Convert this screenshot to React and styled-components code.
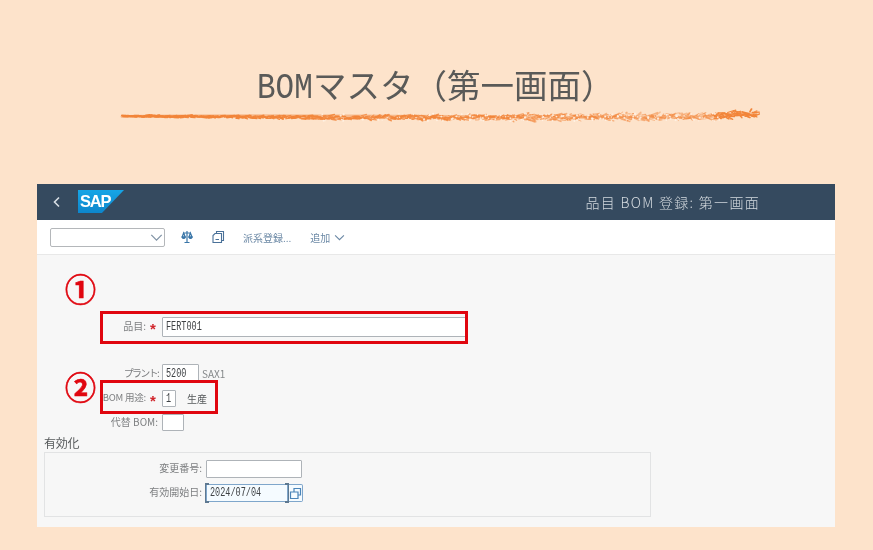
import React from "react";
import styled, { createGlobalStyle } from "styled-components";

const Global = createGlobalStyle`
  html, body { margin: 0; padding: 0; background: #fde3cb; }
  body { width: 873px; height: 550px; overflow: hidden; font-family: "Noto Sans CJK JP", "Liberation Sans", sans-serif; }
`;
const Page = styled.div`
  width: 873px; height: 550px; display: flex; flex-direction: column; background: #fde3cb; overflow: hidden;
`;
const Title = styled.h1`
  margin: 62px 0 0 257px; height: 44px; line-height: 44px; font-size: 33.5px; font-weight: 400; color: #5a5a58;
  font-family: "Noto Sans CJK JP", sans-serif; white-space: nowrap; filter: blur(.35px);
`;
const Latin = styled.span`
  display: inline-block; width: 56px; font-family: "Liberation Mono", monospace; font-size: 36px; transform: scaleX(.86); transform-origin: left center;
`;
const BrushSvg = styled.svg`
  display: block; margin: 2px 0 0 120px; width: 640px; height: 16px; flex: none; filter: blur(.45px);
`;
const Screen = styled.main`
  margin: 60px 0 0 37px; width: 798px; height: 343px; display: flex; flex-direction: column; background: #f7f7f7; position: relative; filter: blur(.3px);
`;
const Shell = styled.header`
  height: 36px; background: #354a5f; display: flex; align-items: center; padding: 0 75px 0 15px; flex: none;
`;
const Back = styled.span`
  display: flex; width: 26px; color: #d8dee4;
`;
const Logo = styled.span`
  width: 46px; height: 23px; margin-bottom: 1px; background: linear-gradient(#16a5e6, #0d86cc);
  clip-path: polygon(0 0, 100% 0, 52% 100%, 0 100%);
  color: #fff; font: 700 16.5px/22px "Liberation Sans", sans-serif; letter-spacing: -1.2px; padding-left: 2px; box-sizing: border-box;
`;
const ShellTitle = styled.span`
  margin-left: auto; color: #d3d9de; font-size: 14px; font-weight: 300; letter-spacing: 1.3px; white-space: nowrap;
`;
const Toolbar = styled.nav`
  height: 35px; background: #fff; border-bottom: 1px solid #e8e8e8; box-sizing: border-box; display: flex; align-items: center; padding: 0 0 0 13px; flex: none;
`;
const Select = styled.div`
  width: 115px; height: 19px; box-sizing: border-box; border: 1px solid #b4b7ba; border-radius: 2px; background: #fff; display: flex; align-items: center; justify-content: flex-end; padding-right: 1px; color: #8294a6;
`;
const ToolIcon = styled.svg`
  flex: none; width: 14px; height: 14px; margin-left: ${p => p.$gap}px;
`;
const ToolText = styled.span`
  color: #6b88a5; font-size: 10px; margin-left: ${p => p.$gap}px; white-space: nowrap; display: inline-flex; align-items: center; gap: 4px;
`;
const Content = styled.section`
  flex: 1; position: relative; display: flex; flex-direction: column;
`;
const Row = styled.div`
  display: flex; align-items: center; height: ${p => p.$h}px; margin-top: ${p => p.$top}px;
`;
const Label = styled.label`
  width: ${p => p.$w || 125}px; flex: none; box-sizing: border-box; padding: 0 4px 2px 0; display: flex; justify-content: flex-end; align-items: center; gap: 2px;
  color: #7d7f81; font-size: ${p => p.$size || 10}px; letter-spacing: ${p => p.$ls || 0}px; white-space: nowrap; line-height: 1;
`;
const Star = styled.span`
  color: #d0242a; font-size: 15px; font-weight: 700; width: 10px; height: 10px; text-align: center; line-height: 15px; font-family: "Liberation Sans", sans-serif; letter-spacing: 0;
`;
const Input = styled.div`
  width: ${p => p.$w}px; height: 100%; box-sizing: border-box; border: 1px solid #aeb3b8; border-radius: 1px; background: #fff; flex: none;
  display: flex; align-items: center; padding-left: 3px; overflow: hidden;
`;
const Value = styled.span`
  display: inline-block; font: 12px/1 "Liberation Mono", monospace; color: #3f4245; transform: scaleX(.71); transform-origin: left center; white-space: nowrap;
`;
const After = styled.span`
  color: ${p => p.$dark ? "#55585a" : "#85888a"}; font-size: 10px; margin-left: ${p => p.$gap}px; white-space: nowrap;
`;
const SectionTitle = styled.h2`
  margin: 5px 0 0 7px; height: 14px; line-height: 14px; font-size: 12px; letter-spacing: -.2px; font-weight: 400; color: #55585a;
`;
const Group = styled.div`
  margin: 2px 0 0 7px; width: 607px; height: 65px; box-sizing: border-box; border: 1px solid #e2e3e4; padding-top: 7px; display: flex; flex-direction: column;
`;
const DateField = styled(Input)`
  border: 1px solid #7fa6cb; border-radius: 0; background: #f5fbff; position: relative; overflow: visible;
  &::before, &::after {
    content: ""; position: absolute; top: -2px; bottom: -2px; width: 3px; border: 1px solid #5e7890; border-width: 2px 0 2px 1px;
  }
  &::before { left: -2px; }
  &::after { right: -2px; transform: scaleX(-1); }
`;
const ValueHelp = styled.span`
  width: 15px; height: 100%; box-sizing: border-box; border: 1px solid #7fa6cb; border-left: 0; border-radius: 0 2px 2px 0; background: #f5fbff; display: flex; align-items: center; justify-content: center; flex: none;
`;
const Mark = styled.div`
  position: absolute; box-sizing: border-box; border: 3px solid #e0060f; left: ${p => p.$x}px; top: ${p => p.$y}px; width: ${p => p.$w}px; height: ${p => p.$h}px; pointer-events: none;
`;
const Num = styled.span`
  position: absolute; left: ${p => p.$x}px; top: ${p => p.$y}px; color: #e0060f; font-size: 31px; font-weight: 700; line-height: 34px; -webkit-text-stroke: .6px #e0060f; font-family: "Noto Sans CJK JP", sans-serif;
`;

function rng(seed) {
  let s = seed;
  return () => { s = (s * 16807) % 2147483647; return s / 2147483647; };
}
const strokes = (() => {
  const r = rng(4711), out = [];
  for (let x = 2; x < 636; x += .8) {
    const t = x / 636;
    const tip = t > .93 ? (t - .93) * 45 : 0;
    const base = 8 + 1.6 * Math.sin(t * 3.14) - tip;
    const spread = 0.5 + 2.5 * Math.min(1, t * 1.6);
    const y = base + (r() - .5) * spread * 2;
    const len = 1.5 + r() * (3 + 3 * t);
    const fade = t > .93 ? .95 : t < .2 ? .95 : Math.max(.3, .9 - (t - .2) * .8);
    out.push({ x, y, len, op: fade + r() * .15, tilt: (r() - .5) * (.8 + 5 * t), w: .8 + r() * (t < .2 ? 1.4 : 1) });
  }
  return out;
})();
const gaps = (() => {
  const r = rng(91), out = [];
  for (let i = 0; i < 210; i++) {
    const x = 200 + Math.pow(r(), .65) * 400;
    out.push({ x, y: 5.5 + r() * 7.5, a: .35 + r() * .8 });
  }
  return out;
})();

function Brush() {
  return (
    <BrushSvg viewBox="0 0 640 16" aria-hidden="true">
      <path d="M2 8.4 C120 6.6 250 8 420 9 S600 9 636 5.5" fill="none" stroke="#f39a5c" strokeOpacity=".55" strokeWidth="3" strokeLinecap="round" />
      {strokes.map((s, i) => (
        <line key={i} x1={s.x} y1={s.y} x2={s.x + s.len} y2={s.y + s.tilt} stroke="#f2853a" strokeOpacity={s.op} strokeWidth={s.w} strokeLinecap="round" />
      ))}
      {gaps.map((g, i) => <circle key={i} cx={g.x} cy={g.y} r={g.a} fill="#fff3e8" fillOpacity=".85" />)}
    </BrushSvg>
  );
}
const Chevron = ({ size = 10, color = "currentColor" }) => (
  <svg width={size} height={size} viewBox="0 0 10 10" fill="none" stroke={color} strokeWidth="1"><path d="M1 3l4 4 4-4" /></svg>
);

export default function App() {
  return (
    <Page>
      <Global />
      <Title><Latin>BOM</Latin>マスタ（第一画面）</Title>
      <Brush />
      <Screen>
        <Shell>
          <Back>
            <svg width="10" height="12" viewBox="0 0 10 12" fill="none" stroke="currentColor" strokeWidth="1.6"><path d="M7 1.5L2.5 6 7 10.5" /></svg>
          </Back>
          <Logo>SAP</Logo>
          <ShellTitle>品目 BOM 登録: 第一画面</ShellTitle>
        </Shell>
        <Toolbar>
          <Select><Chevron size={13} /></Select>
          <ToolIcon $gap={15} viewBox="0 0 14 14" fill="none" stroke="#3a76a8" strokeWidth="1.2">
            <path d="M7 1v11M4.5 12.5h5M3 3h8M3.6 3L2.2 7h3zM10.4 3L9 7h3z" />
            <path d="M2.2 7.2c.5 1.5 2.5 1.5 3 0zM9 7.2c.5 1.5 2.5 1.5 3 0z" fill="#3a76a8" />
          </ToolIcon>
          <ToolIcon $gap={17} viewBox="0 0 14 14" fill="none" stroke="#4a7199" strokeWidth="1.1">
            <path d="M5.5 3V1.5H12.5V10.5H10.5M4 3.5H10.5V12.5H2V5.5zM4.5 9.5h3.5" />
          </ToolIcon>
          <ToolText $gap={18}>派系登録...</ToolText>
          <ToolText $gap={19}>追加<Chevron size={11} /></ToolText>
        </Toolbar>
        <Content>
          <Row $h={20} $top={62}>
            <Label>品目:<Star>*</Star></Label>
            <Input $w={304}><Value>FERT001</Value></Input>
          </Row>
          <Row $h={19} $top={27}>
            <Label $ls={-1.7}>プラント:</Label>
            <Input $w={37}><Value>5200</Value></Input>
            <After $gap={3}>SAX1</After>
          </Row>
          <Row $h={17} $top={7}>
            <Label $size={9.5} $ls={-.2}>BOM 用途:<Star>*</Star></Label>
            <Input $w={14}><Value>1</Value></Input>
            <After $gap={11} $dark>生産</After>
          </Row>
          <Row $h={17} $top={7}>
            <Label>代替 BOM:</Label>
            <Input $w={22} />
          </Row>
          <SectionTitle>有効化</SectionTitle>
          <Group>
            <Row $h={18} $top={0}>
              <Label $w={161}>変更番号:</Label>
              <Input $w={96} />
            </Row>
            <Row $h={18} $top={6}>
              <Label $w={161}>有効開始日:</Label>
              <DateField $w={82}><Value>2024/07/04</Value></DateField>
              <ValueHelp>
                <svg width="13" height="13" viewBox="0 0 13 13" fill="none" stroke="#4a84b8" strokeWidth="1.2"><path d="M5 5V1.5h6.5V8H9M1.5 5H9V11.5H1.5z" /></svg>
              </ValueHelp>
            </Row>
          </Group>
          <Num $x={28} $y={16}>①</Num>
          <Mark $x={63} $y={56} $w={368} $h={33} />
          <Num $x={28} $y={114}>②</Num>
          <Mark $x={63} $y={125} $w={118} $h={34} />
        </Content>
      </Screen>
    </Page>
  );
}
